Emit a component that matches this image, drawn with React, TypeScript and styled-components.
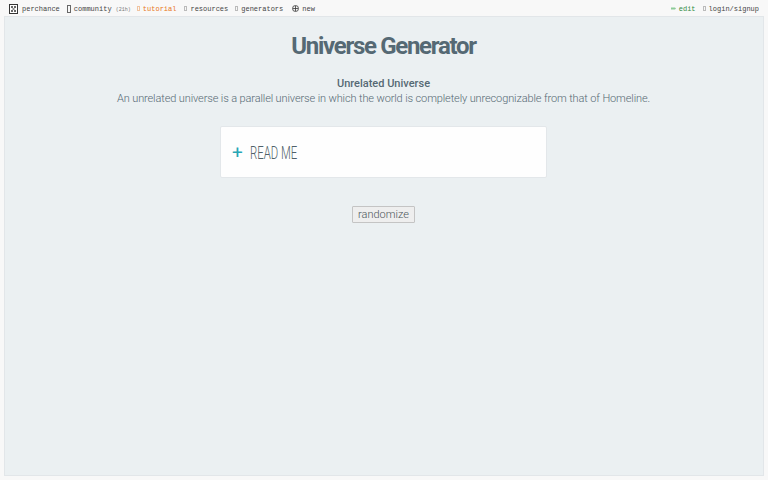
import styled, { createGlobalStyle } from "styled-components";

const GlobalStyle = createGlobalStyle`
  html, body {
    margin: 0;
    padding: 0;
    height: 100%;
    background: #f8f8f8;
  }
  #root {
    height: 100%;
  }
`;

const Page = styled.div`
  display: flex;
  flex-direction: column;
  height: 480px;
  overflow: hidden;
`;

const TopBar = styled.div`
  display: flex;
  justify-content: space-between;
  align-items: center;
  box-sizing: border-box;
  height: 16px;
  padding: 1px 9px 0 9px;
  font-family: "Liberation Mono", monospace;
  font-size: 7px;
  color: #444;
  opacity: 0.99;
`;

const NavGroup = styled.div`
  display: flex;
  align-items: center;
`;

const NavItem = styled.span<{ $color?: string; $gap?: number }>`
  display: flex;
  align-items: center;
  gap: 3px;
  margin-left: ${(p) => p.$gap ?? 0}px;
  color: ${(p) => p.$color ?? "#444"};
  white-space: pre;
`;

const Tofu = styled.span<{ $tall?: boolean; $color?: string }>`
  display: inline-block;
  box-sizing: border-box;
  width: ${(p) => (p.$tall ? 4 : 3)}px;
  height: ${(p) => (p.$tall ? 8 : 5)}px;
  border: 1px solid ${(p) => p.$color ?? "#bbb"};
`;

const Small = styled.span`
  font-size: 5px;
  color: #777;
`;

const Main = styled.main`
  flex: none;
  box-sizing: border-box;
  height: 460px;
  margin: 0 4px;
  padding: 15px 1px 0 0;
  background: #ebf0f2;
  border: 1px solid #e2e6e9;
  display: flex;
  flex-direction: column;
  align-items: center;
  font-family: Roboto, sans-serif;
  color: #546873;
  opacity: 0.99;
`;

const Title = styled.h1`
  margin: 0;
  font-size: 24px;
  line-height: 28px;
  font-weight: 700;
  letter-spacing: -1.3px;
  color: #546873;
`;

const Subtitle = styled.div`
  margin-top: 16px;
  font-size: 11px;
  line-height: 15px;
  font-weight: 500;
`;

const Description = styled.div`
  font-size: 11px;
  line-height: 15px;
  font-weight: 300;
  letter-spacing: -0.12px;
`;

const ReadMe = styled.div`
  display: flex;
  align-items: center;
  gap: 7px;
  box-sizing: border-box;
  width: 327px;
  height: 52px;
  margin-top: 20px;
  padding-left: 11px;
  background: #fff;
  border: 1px solid #e3e7ea;
  border-radius: 2px;
`;

const Plus = styled.span`
  font-size: 19px;
  font-weight: 400;
  line-height: 1;
  color: #26a6b5;
`;

const ReadMeLabel = styled.span`
  display: inline-block;
  font-size: 18px;
  font-weight: 300;
  color: #4f5f68;
  transform: scaleX(0.63);
  transform-origin: left center;
`;

const RandomizeButton = styled.button`
  margin-top: 28px;
  width: 63px;
  height: 17px;
  padding: 0;
  font-family: Roboto, sans-serif;
  font-size: 11px;
  font-weight: 300;
  color: #4a5458;
  background: #eeeeee;
  border: 1px solid #c4c4c4;
  border-radius: 1px;
`;

export default function App() {
  return (
    <Page>
      <GlobalStyle />
      <TopBar>
        <NavGroup>
          <svg width="9" height="10" viewBox="0 0 9 10">
            <rect x="0.5" y="0.5" width="8" height="9" fill="#fff" stroke="#333" />
            <rect x="2" y="2" width="2" height="2" fill="#666" />
            <rect x="5" y="2" width="2" height="2" fill="#666" />
            <rect x="3.5" y="4" width="2" height="2" fill="#888" />
            <rect x="2" y="6" width="2" height="2" fill="#666" />
            <rect x="5" y="6" width="2" height="2" fill="#666" />
          </svg>
          <NavItem $gap={4}>perchance</NavItem>
          <NavItem $gap={7}>
            <Tofu $tall $color="#666" />
            <span>
              community <Small>(21h)</Small>
            </span>
          </NavItem>
          <NavItem $gap={6} $color="#e87722">
            <Tofu $color="#f0c4a0" />
            tutorial
          </NavItem>
          <NavItem $gap={8}>
            <Tofu />
            resources
          </NavItem>
          <NavItem $gap={7}>
            <Tofu />
            generators
          </NavItem>
          <NavItem $gap={9}>
            <svg width="7" height="7" viewBox="0 0 7 7" fill="none" stroke="#333" strokeWidth="0.8">
              <circle cx="3.5" cy="3.5" r="3" />
              <path d="M3.5 1v5M1 3.5h5" />
            </svg>
            new
          </NavItem>
        </NavGroup>
        <NavGroup>
          <NavItem $color="#2e8b3d">
            <svg width="5" height="3" viewBox="0 0 5 3">
              <path d="M0 .5h4l1 1-1 1H0z" fill="#8ccb98" />
            </svg>
            edit
          </NavItem>
          <NavItem $gap={7}>
            <Tofu />
            login/signup
          </NavItem>
        </NavGroup>
      </TopBar>
      <Main>
        <Title>Universe Generator</Title>
        <Subtitle>Unrelated Universe</Subtitle>
        <Description>
          An unrelated universe is a parallel universe in which the world is
          completely unrecognizable from that of Homeline.
        </Description>
        <ReadMe>
          <Plus>+</Plus>
          <ReadMeLabel>READ ME</ReadMeLabel>
        </ReadMe>
        <RandomizeButton>randomize</RandomizeButton>
      </Main>
    </Page>
  );
}
